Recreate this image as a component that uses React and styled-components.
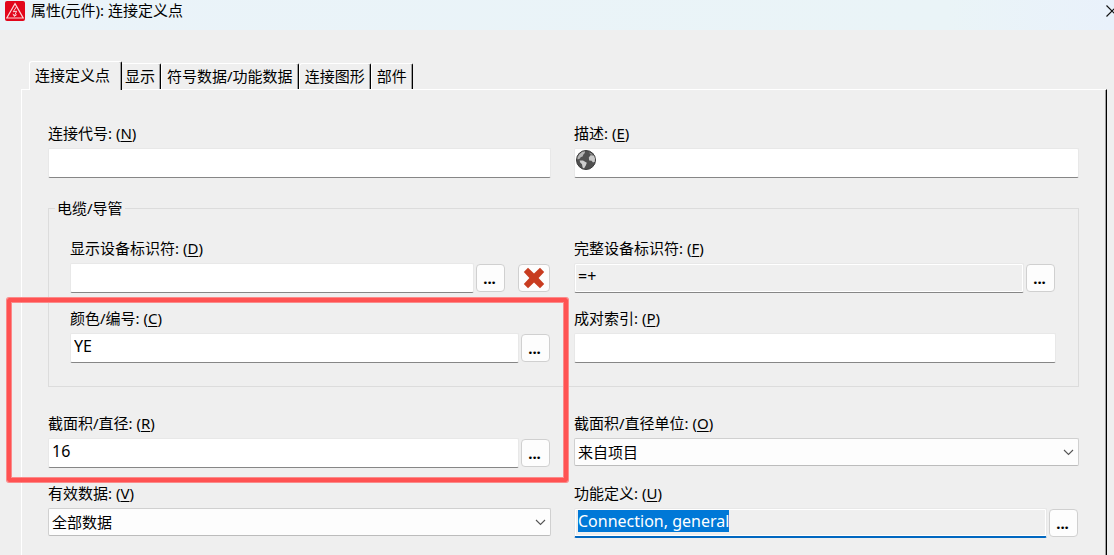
import React, { useEffect, useRef, useState } from "react";
import styled, { createGlobalStyle } from "styled-components";

const TABS = ["连接定义点", "显示", "符号数据/功能数据", "连接图形", "部件"];

function AppIcon() {
  return (
    <svg width="20" height="20" viewBox="0 0 20 20" aria-hidden="true">
      <rect width="20" height="20" rx="2" fill="#e2061b" />
      <path d="M10 2.6 L18.2 17 H1.8 Z" fill="none" stroke="#fbd5d8" strokeWidth="1.2" />
      <path d="M11.4 5.8 L8.2 10.8 L11.6 10.2 L9.4 15 M8 12.8 L9.3 15.4 L11.8 13.6" fill="none" stroke="#fbd5d8" strokeWidth="1" />
    </svg>
  );
}

function CloseIcon() {
  return (
    <svg width="12" height="12" viewBox="0 0 12 12" aria-hidden="true">
      <path d="M0.5 0.5 L11.5 11.5 M11.5 0.5 L0.5 11.5" stroke="#111" strokeWidth="1.2" />
    </svg>
  );
}

function DeleteIcon() {
  return (
    <svg width="22" height="22" viewBox="0 0 22 22" aria-hidden="true">
      <path
        d="M5 0.8 L11 6.4 L17 0.8 L21.2 5 L15.6 11 L21.2 17 L17 21.2 L11 15.6 L5 21.2 L0.8 17 L6.4 11 L0.8 5 Z"
        fill="#c83c20"
      />
    </svg>
  );
}

function Globe() {
  return (
    <GlobeIcon width="20" height="20" viewBox="0 0 20 20" aria-hidden="true">
      <circle cx="10" cy="10" r="9.5" fill="#505050" stroke="#3a3a3a" />
      <path d="M1.4 8 L3 4.6 L6 2 L9 1.2 L8.8 3 L7.4 4.4 L6.6 6.4 L4.6 7.2 L4 8.6 L1.6 9.6 Z" fill="#b4b4b4" />
      <path d="M3.6 10.4 L7 10.4 L10.8 12.8 L9.8 15.4 L8 18.4 L6.6 17.4 L6 14.2 L4.2 12.4 Z" fill="#cfcfcf" />
      <path d="M12.8 7.4 L14.6 5.2 L17.8 5.6 L19 8.4 L18.8 11.8 L17 12.6 L15.6 10.8 L13.2 10.4 Z" fill="#c9c9c9" />
      <path d="M13 2.4 L15.6 3.4 L16.8 5 L14.6 4.6 Z" fill="#999" />
    </GlobeIcon>
  );
}

// 带快捷键字母的标签
function Field({ id, label, hotkey, children }) {
  return (
    <FieldWrap>
      <Label htmlFor={id}>
        {label}: (<u>{hotkey}</u>)
      </Label>
      <Control>{children}</Control>
    </FieldWrap>
  );
}

function Select({ id, options }) {
  return (
    <SelectWrap>
      <SelectBox id={id}>
        {options.map((option) => (
          <option key={option}>{option}</option>
        ))}
      </SelectBox>
      <Chevron width="11" height="7" viewBox="0 0 11 7" aria-hidden="true">
        <path d="M1 1 L5.5 5.5 L10 1" fill="none" stroke="#555" strokeWidth="1.1" />
      </Chevron>
    </SelectWrap>
  );
}

function App() {
  const [activeTab, setActiveTab] = useState(0);
  const functionRef = useRef(null);

  // 打开对话框时选中功能定义
  useEffect(() => {
    functionRef.current.focus();
    functionRef.current.select();
  }, []);

  return (
    <Dialog>
      <GlobalStyle />
      <TitleBar>
        <AppIcon />
        <Title>属性(元件): 连接定义点</Title>
        <CloseButton type="button" aria-label="关闭">
          <CloseIcon />
        </CloseButton>
      </TitleBar>

      <TabList role="tablist">
        {TABS.map((tab, index) => (
          <Tab
            key={tab}
            type="button"
            role="tab"
            aria-selected={index === activeTab}
            $active={index === activeTab}
            onClick={() => setActiveTab(index)}
          >
            {tab}
          </Tab>
        ))}
      </TabList>

      <Panel role="tabpanel">
        <Row>
          <Field id="code" label="连接代号" hotkey="N">
            <TextInput id="code" />
          </Field>
          <Field id="description" label="描述" hotkey="E">
            <TextInput id="description" $icon />
            <Globe />
          </Field>
        </Row>

        <Group>
          <Legend>电缆/导管</Legend>
          <GroupRow>
            <Field id="shownTag" label="显示设备标识符" hotkey="D">
              <TextInput id="shownTag" />
              <MoreButton type="button">...</MoreButton>
              <DeleteButton type="button" aria-label="删除">
                <DeleteIcon />
              </DeleteButton>
            </Field>
            <Field id="fullTag" label="完整设备标识符" hotkey="F">
              <TextInput id="fullTag" defaultValue="=+" readOnly />
              <MoreButton type="button">...</MoreButton>
            </Field>
          </GroupRow>
          <GroupRow>
            <Field id="color" label="颜色/编号" hotkey="C">
              <TextInput id="color" defaultValue="YE" />
              <MoreButton type="button">...</MoreButton>
            </Field>
            <Field id="pairIndex" label="成对索引" hotkey="P">
              <TextInput id="pairIndex" />
            </Field>
          </GroupRow>
        </Group>

        <Row>
          <Marked>
            <Field id="section" label="截面积/直径" hotkey="R">
              <TextInput id="section" defaultValue="16" />
              <MoreButton type="button">...</MoreButton>
            </Field>
            <Highlight />
          </Marked>
          <Field id="unit" label="截面积/直径单位" hotkey="O">
            <Select id="unit" options={["来自项目", "mm²", "AWG"]} />
          </Field>
        </Row>
        <Row>
          <Field id="validData" label="有效数据" hotkey="V">
            <Select id="validData" options={["全部数据"]} />
          </Field>
          <Field id="functionDef" label="功能定义" hotkey="U">
            <TextInput id="functionDef" ref={functionRef} defaultValue="Connection, general" readOnly />
            <MoreButton type="button">...</MoreButton>
          </Field>
        </Row>
      </Panel>
    </Dialog>
  );
}

export default App;

const GlobalStyle = createGlobalStyle`
  * {
    box-sizing: border-box;
  }

  body {
    margin: 0;
    background: #efefef;
  }

  body, button, input, select {
    font-family: "Noto Sans", "Noto Sans CJK SC", sans-serif;
    font-size: 15px;
    line-height: 20px;
    color: #000;
  }
`;

const Dialog = styled.div`
  display: flex;
  flex-direction: column;
  min-height: 100vh;
  overflow: hidden;
`;

const TitleBar = styled.header`
  display: flex;
  align-items: flex-start;
  height: 30px;
  padding: 1px 0 0 5px;
  background: linear-gradient(90deg, #eaf3f9, #eaf4f7 85%, #e9f1fb);
`;

const Title = styled.h1`
  flex: 1;
  margin: 0;
  padding-left: 6px;
  font-size: 15px;
  font-weight: normal;
  line-height: 18px;
`;

const CloseButton = styled.button`
  display: flex;
  margin: 4px -4px 0 0;
  padding: 0;
  border: none;
  background: none;
`;

const TabList = styled.div`
  display: flex;
  align-items: flex-end;
  padding: 31px 8px 0 29px;
`;

const Tab = styled.button`
  position: relative;
  z-index: ${(props) => (props.$active ? 1 : 0)};
  height: ${(props) => (props.$active ? "29px" : "26px")};
  margin: ${(props) => (props.$active ? "0 -3px -1px 0" : "0")};
  padding: ${(props) => (props.$active ? "0 11px 2px 5px" : "0 5px 2px")};
  border: 1px solid #fff;
  border-right-color: #000;
  border-bottom: none;
  border-radius: 3px 2px 0 0;
  background: #efefef;
  box-shadow: inset -1px 0 #a0a0a0;
  white-space: nowrap;
`;

const Panel = styled.main`
  flex: 1;
  margin: 0 7px 0 21px;
  padding: 34px 27px 16px 26px;
  border: solid #fff;
  border-width: 1px 1px 0 1px;
  border-right-color: #000;
  box-shadow: inset -1px 0 #a0a0a0;
`;

const Row = styled.div`
  display: grid;
  grid-template-columns: 503fr 505fr;
  column-gap: 23px;

  & + & {
    margin-top: 16px;
  }
`;

const Group = styled.fieldset`
  min-width: 0;
  margin: 21px 0 27px;
  padding: 21px 22px 23px 21px;
  border: 1px solid #dcdcdc;
`;

const GroupRow = styled(Row)`
  grid-template-columns: 481fr 482fr;
`;

const Legend = styled.legend`
  height: 19px;
  margin-left: -15px;
  padding: 0 2px;
  line-height: 18px;
`;

const FieldWrap = styled.div`
  display: flex;
  flex-direction: column;
  gap: 4px;
  min-width: 0;
`;

const Label = styled.label`
  height: 20px;
  line-height: 18px;
  white-space: nowrap;

  u {
    text-underline-offset: 2px;
  }
`;

const Control = styled.div`
  position: relative;
  display: flex;
  align-items: center;
  gap: 2px;
  height: 30px;
`;

const TextInput = styled.input`
  flex: 1;
  min-width: 0;
  height: 30px;
  padding: 0 3px 4px ${(props) => (props.$icon ? "24px" : "3px")};
  border: 1px solid #e8e8e8;
  border-bottom-color: #868686;
  border-radius: 2px;
  outline: none;
  background: #fff;
  font-size: 16px;

  &:read-only {
    background: #efefef;
    box-shadow: inset 0 0 0 1px #fff;
  }

  &:focus {
    padding-bottom: 3px;
    border-bottom: 2px solid #0067c0;
  }

  &::selection {
    background: #0078d7;
    color: #fff;
  }
`;

const MoreButton = styled.button`
  width: 29px;
  height: 28px;
  margin-right: 1px;
  padding: 0 2px 0 0;
  border: 1px solid #d0d0d0;
  border-radius: 4px;
  background: #fdfdfd;
  font-weight: bold;
`;

const DeleteButton = styled(MoreButton)`
  display: flex;
  align-items: center;
  justify-content: center;
  width: 32px;
  margin-left: 10px;
  padding: 0;
`;

const GlobeIcon = styled.svg`
  position: absolute;
  top: 2px;
  left: 2px;
`;

const SelectWrap = styled.div`
  position: relative;
  flex: 1;
  align-self: flex-start;
`;

const SelectBox = styled.select`
  display: block;
  width: 100%;
  height: 28px;
  padding: 0 24px 0 3px;
  border: 1px solid #d0d0d0;
  border-bottom-color: #bcbcbc;
  border-radius: 2px;
  outline: none;
  appearance: none;
  background: #fdfdfd;
`;

const Chevron = styled.svg`
  position: absolute;
  top: 11px;
  right: 5px;
  pointer-events: none;
`;

const Marked = styled.div`
  position: relative;
  min-width: 0;
`;

// 红框标出颜色和截面积
const Highlight = styled.div`
  position: absolute;
  z-index: 2;
  left: -41px;
  right: -17px;
  bottom: -14px;
  height: 184px;
  border: 4px solid #ff5252;
  border-radius: 2px;
  box-shadow: 0 0 0 1px #fb8a8a, inset 0 0 0 1px #fb8a8a;
  pointer-events: none;
`;
